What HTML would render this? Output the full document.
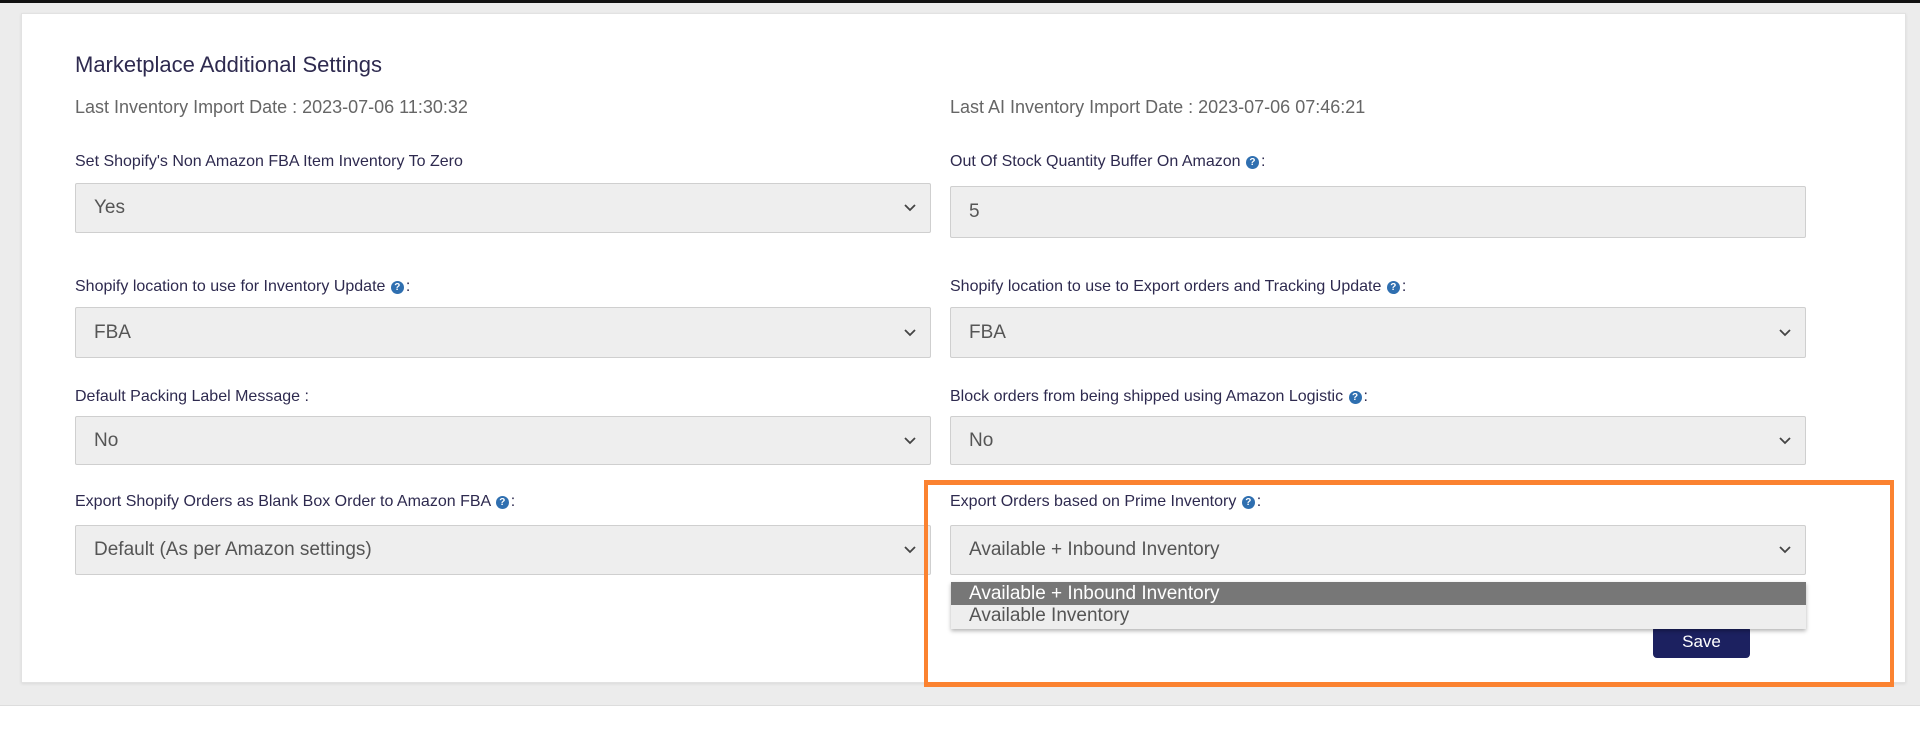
<!DOCTYPE html>
<html><head><meta charset="utf-8"><style>
*{box-sizing:border-box;margin:0;padding:0}
body{width:1920px;height:731px;background:#fff;font-family:"Liberation Sans",Arial,sans-serif;position:relative;overflow:hidden}
.abs{position:absolute}
.band{left:0;top:0;width:1920px;height:706px;background:#ececec;border-bottom:1px solid #ddd}
.top{left:0;top:0;width:1920px;height:3px;background:#111}
.card{left:21px;top:13px;width:1885px;height:670px;background:#fff;border:1px solid #e2e2e2;box-shadow:0 1px 3px rgba(0,0,0,.08)}
.t{color:#2e2a4f;white-space:nowrap}
.lbl{font-size:16px;color:#2e2a4f;white-space:nowrap;line-height:18px}
.sel{background:#eee;border:1px solid #cfcfcf;border-radius:2px;font-size:19px;color:#555;padding-left:18px;display:flex;align-items:center}
.sel svg{position:absolute;right:14px;top:50%;margin-top:-4px}
.q{display:inline-block;width:13px;height:13px;border-radius:50%;background:#2f6fb0;color:#fff;font-size:10px;font-weight:bold;text-align:center;line-height:13px;vertical-align:1px;margin:0 2px 0 1px}
</style></head><body>
<div class="abs band"></div>
<div class="abs top"></div>
<div class="abs card"></div>
<div class="abs t" style="left:75px;top:52px;font-size:22px">Marketplace Additional Settings</div>
<div class="abs" style="left:75px;top:97px;font-size:18px;color:#666">Last Inventory Import Date : 2023-07-06 11:30:32</div>
<div class="abs" style="left:950px;top:97px;font-size:18px;color:#666">Last AI Inventory Import Date : 2023-07-06 07:46:21</div>

<div class="abs lbl" style="left:75px;top:153px">Set Shopify's Non Amazon FBA Item Inventory To Zero</div>
<div class="abs sel" style="left:75px;top:183px;width:856px;height:50px">Yes<svg width="12" height="8"><path d="M1 1l5 5 5-5" stroke="#444" stroke-width="1.8" fill="none"/></svg></div>
<div class="abs lbl" style="left:950px;top:153px">Out Of Stock Quantity Buffer On Amazon <span class="q">?</span>:</div>
<div class="abs sel" style="left:950px;top:186px;width:856px;height:52px">5</div>

<div class="abs lbl" style="left:75px;top:278px">Shopify location to use for Inventory Update <span class="q">?</span>:</div>
<div class="abs sel" style="left:75px;top:307px;width:856px;height:51px">FBA<svg width="12" height="8"><path d="M1 1l5 5 5-5" stroke="#444" stroke-width="1.8" fill="none"/></svg></div>
<div class="abs lbl" style="left:950px;top:278px">Shopify location to use to Export orders and Tracking Update <span class="q">?</span>:</div>
<div class="abs sel" style="left:950px;top:307px;width:856px;height:51px">FBA<svg width="12" height="8"><path d="M1 1l5 5 5-5" stroke="#444" stroke-width="1.8" fill="none"/></svg></div>

<div class="abs lbl" style="left:75px;top:388px">Default Packing Label Message :</div>
<div class="abs sel" style="left:75px;top:416px;width:856px;height:49px">No<svg width="12" height="8"><path d="M1 1l5 5 5-5" stroke="#444" stroke-width="1.8" fill="none"/></svg></div>
<div class="abs lbl" style="left:950px;top:388px">Block orders from being shipped using Amazon Logistic <span class="q">?</span>:</div>
<div class="abs sel" style="left:950px;top:416px;width:856px;height:49px">No<svg width="12" height="8"><path d="M1 1l5 5 5-5" stroke="#444" stroke-width="1.8" fill="none"/></svg></div>

<div class="abs lbl" style="left:75px;top:493px">Export Shopify Orders as Blank Box Order to Amazon FBA <span class="q">?</span>:</div>
<div class="abs sel" style="left:75px;top:525px;width:856px;height:50px">Default (As per Amazon settings)<svg width="12" height="8"><path d="M1 1l5 5 5-5" stroke="#444" stroke-width="1.8" fill="none"/></svg></div>
<div class="abs lbl" style="left:950px;top:493px">Export Orders based on Prime Inventory <span class="q">?</span>:</div>
<div class="abs sel" style="left:950px;top:525px;width:856px;height:50px">Available + Inbound Inventory<svg width="12" height="8"><path d="M1 1l5 5 5-5" stroke="#444" stroke-width="1.8" fill="none"/></svg></div>

<div class="abs" style="left:1653px;top:626px;width:97px;height:32px;background:#1c2160;border-radius:4px;color:#fff;font-size:17px;text-align:center;line-height:32px">Save</div>

<div class="abs" style="left:951px;top:582px;width:855px;height:47px;background:#eee;box-shadow:0 2px 4px rgba(0,0,0,.3);font-size:19px">
<div style="background:#777;color:#fff;height:23px;line-height:23px;padding-left:18px">Available + Inbound Inventory</div>
<div style="color:#555;height:23px;line-height:22px;padding-left:18px">Available Inventory</div>
</div>

<div class="abs" style="left:924px;top:480px;width:970px;height:207px;border:5px solid #fb8230;border-left-width:4px;border-right-width:4px"></div>
</body></html>
